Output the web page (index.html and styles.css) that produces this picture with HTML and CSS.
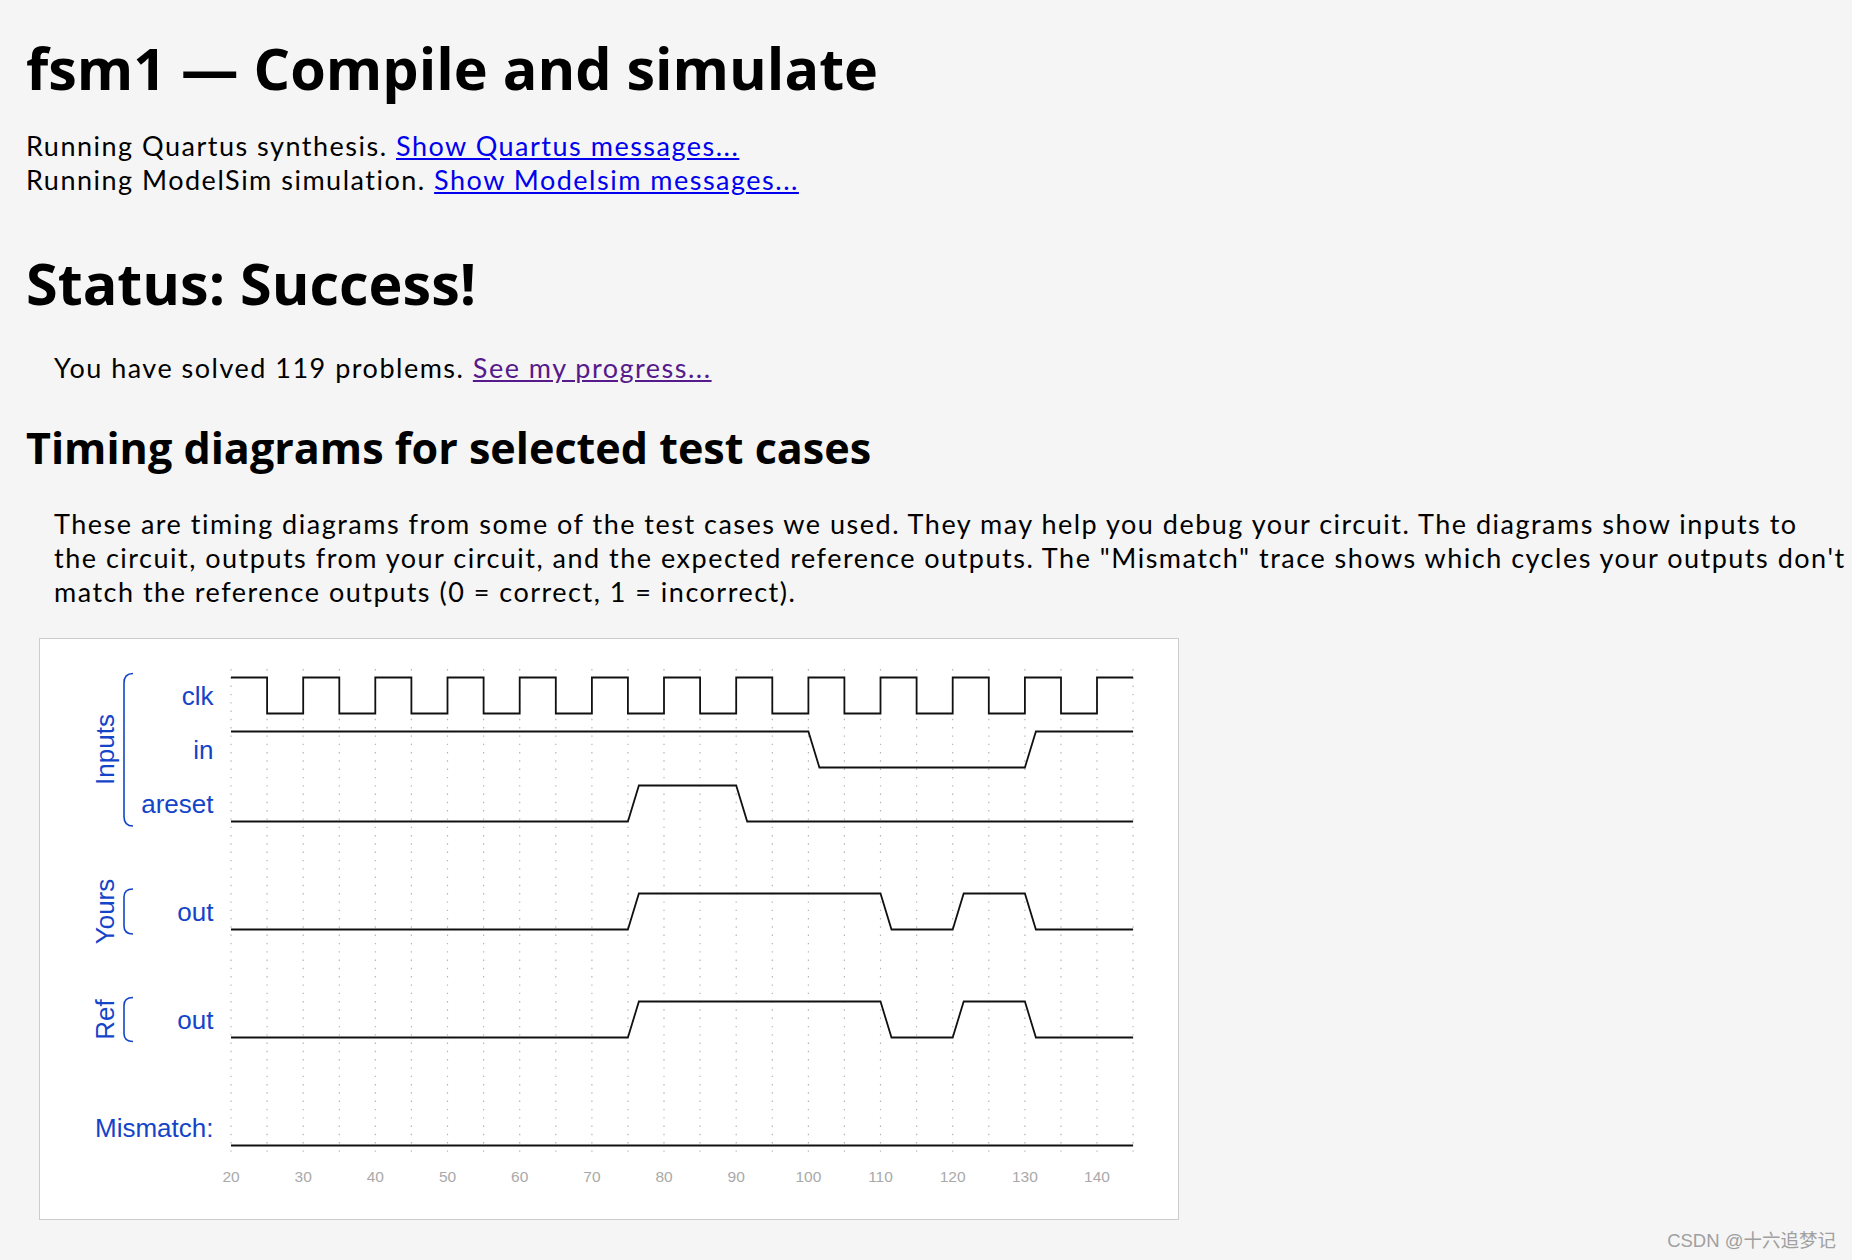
FILE: index.html
```html
<!DOCTYPE html>
<html lang="en">
<head>
<meta charset="utf-8">
<title>fsm1 — Compile and simulate</title>
<link rel="stylesheet" href="styles.css">
</head>
<body>
<h1 class="title">fsm1 — Compile and simulate</h1>
<p class="log">Running Quartus synthesis. <a class="link" href="#">Show Quartus messages...</a><br>Running ModelSim simulation. <a class="link" href="#">Show Modelsim messages...</a></p>
<h1 class="title status">Status: Success!</h1>
<p class="solved">You have solved 119 problems. <a class="link visited" href="#">See my progress...</a></p>
<h2 class="subtitle">Timing diagrams for selected test cases</h2>
<p class="desc">These are timing diagrams from some of the test cases we used. They may help you debug your circuit. The diagrams show inputs to<br>the circuit, outputs from your circuit, and the expected reference outputs. The "Mismatch" trace shows which cycles your outputs don't<br>match the reference outputs (0 = correct, 1 = incorrect).</p>
<div class="diagram">
<svg class="wave" width="1138" height="580" viewBox="0 0 1138 580">
<g transform="translate(-40 -639)">
<path class="grid" d="M231 669V1152 M267.1 669V1152 M303.2 669V1152 M339.3 669V1152 M375.3 669V1152 M411.4 669V1152 M447.5 669V1152 M483.6 669V1152 M519.7 669V1152 M555.8 669V1152 M591.9 669V1152 M627.9 669V1152 M664 669V1152 M700.1 669V1152 M736.2 669V1152 M772.3 669V1152 M808.4 669V1152 M844.4 669V1152 M880.5 669V1152 M916.6 669V1152 M952.7 669V1152 M988.8 669V1152 M1024.9 669V1152 M1061 669V1152 M1097 669V1152 M1133.1 669V1152"/>
<path class="sig" d="M231 677.5 H267.1 V713.5 H303.2 V677.5 H339.3 V713.5 H375.3 V677.5 H411.4 V713.5 H447.5 V677.5 H483.6 V713.5 H519.7 V677.5 H555.8 V713.5 H591.9 V677.5 H627.9 V713.5 H664 V677.5 H700.1 V713.5 H736.2 V677.5 H772.3 V713.5 H808.4 V677.5 H844.4 V713.5 H880.5 V677.5 H916.6 V713.5 H952.7 V677.5 H988.8 V713.5 H1024.9 V677.5 H1061 V713.5 H1097 V677.5 H1133.1"/>
<path class="sig" d="M231 731.5 H808.4 L819.4 767.5 H1024.9 L1035.9 731.5 H1133.1"/>
<path class="sig" d="M231 821.5 H627.9 L638.9 785.5 H736.2 L747.2 821.5 H1133.1"/>
<path class="sig" d="M231 929.5 H627.9 L638.9 893.5 H880.5 L891.5 929.5 H952.7 L963.7 893.5 H1024.9 L1035.9 929.5 H1133.1"/>
<path class="sig" d="M231 1037.5 H627.9 L638.9 1001.5 H880.5 L891.5 1037.5 H952.7 L963.7 1001.5 H1024.9 L1035.9 1037.5 H1133.1"/>
<path class="sig" d="M231 1145.5 H1133.1"/>
<path class="brace" d="M133 673.5 Q124 673.5 124 683 V816.5 Q124 826 133 826"/>
<path class="brace" d="M133 889 Q124 889 124 897 V926 Q124 934 133 934"/>
<path class="brace" d="M133 997.5 Q124 997.5 124 1005.5 V1033.5 Q124 1041.5 133 1041.5"/>
<text class="group" transform="translate(114 749.5) rotate(-90)">Inputs</text>
<text class="group" transform="translate(114 911.5) rotate(-90)">Yours</text>
<text class="group" transform="translate(114 1019.5) rotate(-90)">Ref</text>
<text class="name" x="213.5" y="704.5">clk</text>
<text class="name" x="213.5" y="758.5">in</text>
<text class="name" x="213.5" y="812.5">areset</text>
<text class="name" x="213.5" y="920.5">out</text>
<text class="name" x="213.5" y="1028.5">out</text>
<text class="name" x="213.5" y="1136.5">Mismatch:</text>
<text class="tick" x="231" y="1182">20</text>
<text class="tick" x="303.2" y="1182">30</text>
<text class="tick" x="375.3" y="1182">40</text>
<text class="tick" x="447.5" y="1182">50</text>
<text class="tick" x="519.7" y="1182">60</text>
<text class="tick" x="591.9" y="1182">70</text>
<text class="tick" x="664" y="1182">80</text>
<text class="tick" x="736.2" y="1182">90</text>
<text class="tick" x="808.4" y="1182">100</text>
<text class="tick" x="880.5" y="1182">110</text>
<text class="tick" x="952.7" y="1182">120</text>
<text class="tick" x="1024.9" y="1182">130</text>
<text class="tick" x="1097" y="1182">140</text>
</g>
</svg>
</div>
<div class="watermark">CSDN @十六追梦记</div>
</body>
</html>
```
FILE: styles.css
```css
html {
  background: #f5f5f5;
}
body {
  margin: 0;
  padding: 0 26px;
  background: #f5f5f5;
  color: #000;
  font-family: Lato, "Noto Sans", sans-serif;
  font-weight: 400;
  font-size: 27px;
  letter-spacing: 1.5px;
  position: relative;
  min-height: 1260px;
  box-sizing: border-box;
}
.title {
  font-family: "Open Sans", "Noto Sans", sans-serif;
  font-weight: 700;
  font-size: 57.5px;
  line-height: 78px;
  letter-spacing: 0;
  margin: 29px 0 0;
}
.log {
  margin: 22px 0 0;
  line-height: 34px;
}
.status {
  margin-top: 47px;
}
.solved {
  margin: 28.7px 0 0 28px;
  line-height: 34px;
}
.link {
  color: #0000ee;
}
.visited {
  color: #551a8b;
}
.subtitle {
  font-family: "Open Sans", "Noto Sans", sans-serif;
  font-weight: 700;
  font-size: 43.1px;
  line-height: 60px;
  letter-spacing: 0;
  margin: 33.6px 0 0;
}
.desc {
  margin: 28.7px 0 0 28px;
  line-height: 34px;
  white-space: nowrap;
}
.diagram {
  margin: 29.4px 0 0 13px;
  width: 1138px;
  height: 580px;
  border: 1px solid #cccccc;
  background: #ffffff;
}
.wave {
  display: block;
  letter-spacing: 0;
}
.grid {
  fill: none;
  stroke: #b4b4b4;
  stroke-width: 1.2;
  stroke-dasharray: 1.4 6.9;
}
.sig {
  fill: none;
  stroke: #111;
  stroke-width: 1.8;
  stroke-linejoin: miter;
}
.brace {
  fill: none;
  stroke: #1444c8;
  stroke-width: 1.6;
}
.group,
.name {
  font-family: "Liberation Sans", Arial, sans-serif;
  font-size: 26px;
  font-weight: 400;
  fill: #1444c8;
}
.group {
  text-anchor: middle;
}
.name {
  text-anchor: end;
}
.tick {
  font-family: "Liberation Sans", Arial, sans-serif;
  font-size: 15.5px;
  font-weight: 400;
  fill: #a9a9a9;
  text-anchor: middle;
}
.watermark {
  position: absolute;
  right: 16px;
  top: 1229px;
  font-family: "Liberation Sans", "Noto Sans CJK SC", sans-serif;
  font-size: 18.5px;
  font-weight: 400;
  letter-spacing: 0;
  color: #a0a0a0;
  line-height: 24px;
}
```
